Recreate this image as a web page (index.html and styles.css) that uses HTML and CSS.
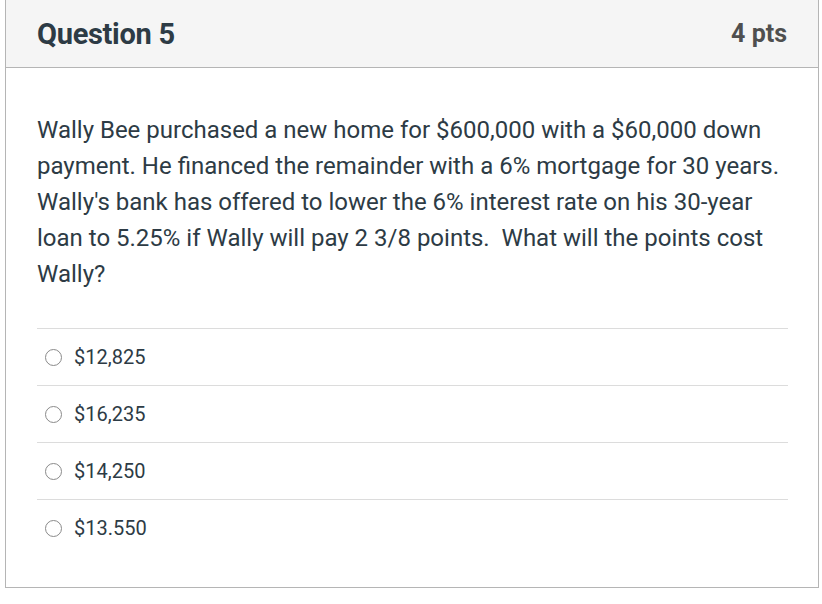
FILE: index.html
```html
<!DOCTYPE html>
<html>
<head>
<meta charset="utf-8">
<link rel="stylesheet" href="styles.css">
</head>
<body>
<div class="question">
  <div class="header">
    <h2 class="title">Question 5</h2>
    <span class="points">4 pts</span>
  </div>
  <div class="content">
    <p class="text">Wally Bee purchased a new home for $600,000 with a $60,000 down payment. He financed the remainder with a 6% mortgage for 30 years. Wally's bank has offered to lower the 6% interest rate on his 30-year loan to 5.25% if Wally will pay 2 3/8 points.&nbsp; What will the points cost Wally?</p>
    <div class="answers">
      <label class="answer"><span class="radio"></span><span class="label">$12,825</span></label>
      <label class="answer"><span class="radio"></span><span class="label">$16,235</span></label>
      <label class="answer"><span class="radio"></span><span class="label">$14,250</span></label>
      <label class="answer"><span class="radio"></span><span class="label">$13.550</span></label>
    </div>
  </div>
</div>
</body>
</html>
```
FILE: styles.css
```css
html, body {
  margin: 0;
  padding: 0;
  background: #fff;
}
body {
  font-family: Roboto, "Liberation Sans", sans-serif;
  color: #2d3b45;
}
.question {
  margin-left: 5px;
  width: 812px;
  border: 1px solid #b5b5b5;
  border-top: none;
}
.header {
  height: 68px;
  background: #f5f5f5;
  border-bottom: 1px solid #b5b5b5;
  display: flex;
  align-items: center;
  justify-content: space-between;
  padding: 0 31px;
  box-sizing: border-box;
}
.title {
  margin: 0;
  font-size: 29px;
  font-weight: 700;
  color: #2d3b45;
  letter-spacing: -0.3px;
}
.points {
  font-size: 25px;
  font-weight: 700;
  color: #4f4f4f;
}
.content {
  padding: 44px 30px 31px 31px;
}
.text {
  margin: 0 0 36px 0;
  font-size: 24px;
  line-height: 36px;
}
.answers {
  display: flex;
  flex-direction: column;
}
.answer {
  display: flex;
  align-items: center;
  height: 57px;
  border-top: 1px solid #dcdcdc;
  box-sizing: border-box;
  padding-left: 8px;
  font-size: 20px;
}
.radio {
  width: 17px;
  height: 17px;
  border: 1.5px solid #8a8a8a;
  border-radius: 50%;
  box-sizing: border-box;
  margin-right: 12px;
}
.label {
  color: #2d3b45;
}
```
